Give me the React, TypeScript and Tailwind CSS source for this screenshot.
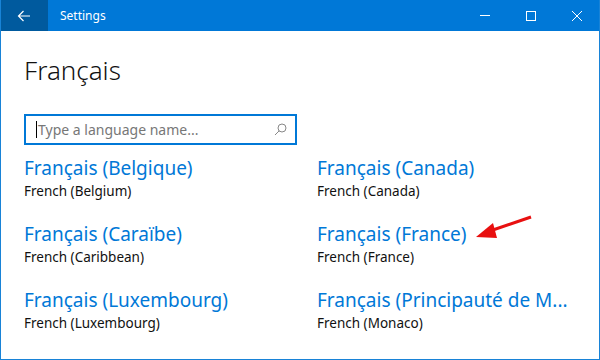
import React from "react";

const langs = [
  { name: "Français (Belgique)", en: "French (Belgium)" },
  { name: "Français (Canada)", en: "French (Canada)" },
  { name: "Français (Caraïbe)", en: "French (Caribbean)" },
  { name: "Français (France)", en: "French (France)" },
  { name: "Français (Luxembourg)", en: "French (Luxembourg)" },
  { name: "Français (Principauté de M...", en: "French (Monaco)" },
];

export default function App() {
  return (
    <div
      className="w-[600px] h-[360px] bg-white border-x border-b border-[#1883d7] flex flex-col overflow-hidden relative"
      style={{ fontFamily: '"Noto Sans", "Open Sans", sans-serif' }}
    >
      {/* title bar */}
      <div className="h-[31px] bg-[#0078d7] flex items-center text-white shrink-0 -mx-px">
        <div className="w-[48px] h-full bg-[#005a9e] flex items-center justify-center">
          <svg width="14" height="12" viewBox="0 0 14 12" fill="none" stroke="white" strokeWidth="1.2">
            <path d="M13 6H1.5M6.5 1L1.5 6l5 5" />
          </svg>
        </div>
        <span className="ml-[12px] text-[12px]">Settings</span>
        <div className="ml-auto flex h-full items-center">
          <div className="w-[46px] flex justify-center">
            <div className="w-[10px] h-px bg-white" />
          </div>
          <div className="w-[46px] flex justify-center">
            <div className="w-[10px] h-[10px] border border-white" />
          </div>
          <div className="w-[46px] flex justify-center">
            <svg width="10" height="10" viewBox="0 0 10 10" stroke="white" strokeWidth="1">
              <path d="M0 0L10 10M10 0L0 10" />
            </svg>
          </div>
        </div>
      </div>

      <div className="pl-[23px] pr-[24px]">
        <h1 className="text-[26px] font-light leading-none text-[#111] mt-[26px]">Français</h1>

        <div className="mt-[31px] w-[273px] h-[31px] border-2 border-[#0078d7] flex items-center pl-[10px] pr-[8px]">
          <div className="w-px h-[17px] bg-black" />
          <span className="text-[14px] text-[#777] ml-[1px]">Type a language name...</span>
          <svg className="ml-auto" width="13" height="13" viewBox="0 0 13 13" fill="none" stroke="#888" strokeWidth="1">
            <circle cx="8" cy="5" r="4" />
            <path d="M5.2 7.8L1 12" />
          </svg>
        </div>

        <div className="grid grid-cols-[293px_1fr] mt-[9px]">
          {langs.map((l) => (
            <div key={l.en} className="h-[66px] pt-[1px]">
              <div className="text-[19px] leading-[27px] text-[#0078d7] whitespace-nowrap">{l.name}</div>
              <div className="text-[13.5px] leading-[18px] text-[#111]">{l.en}</div>
            </div>
          ))}
        </div>
      </div>

      {/* red annotation arrow */}
      <svg className="absolute left-[470px] top-[210px]" width="70" height="35" viewBox="0 0 70 35">
        <path d="M60 7L16 22" stroke="#e81010" strokeWidth="3" />
        <path d="M5 27L22 13L26 28Z" fill="#e81010" />
      </svg>
    </div>
  );
}
